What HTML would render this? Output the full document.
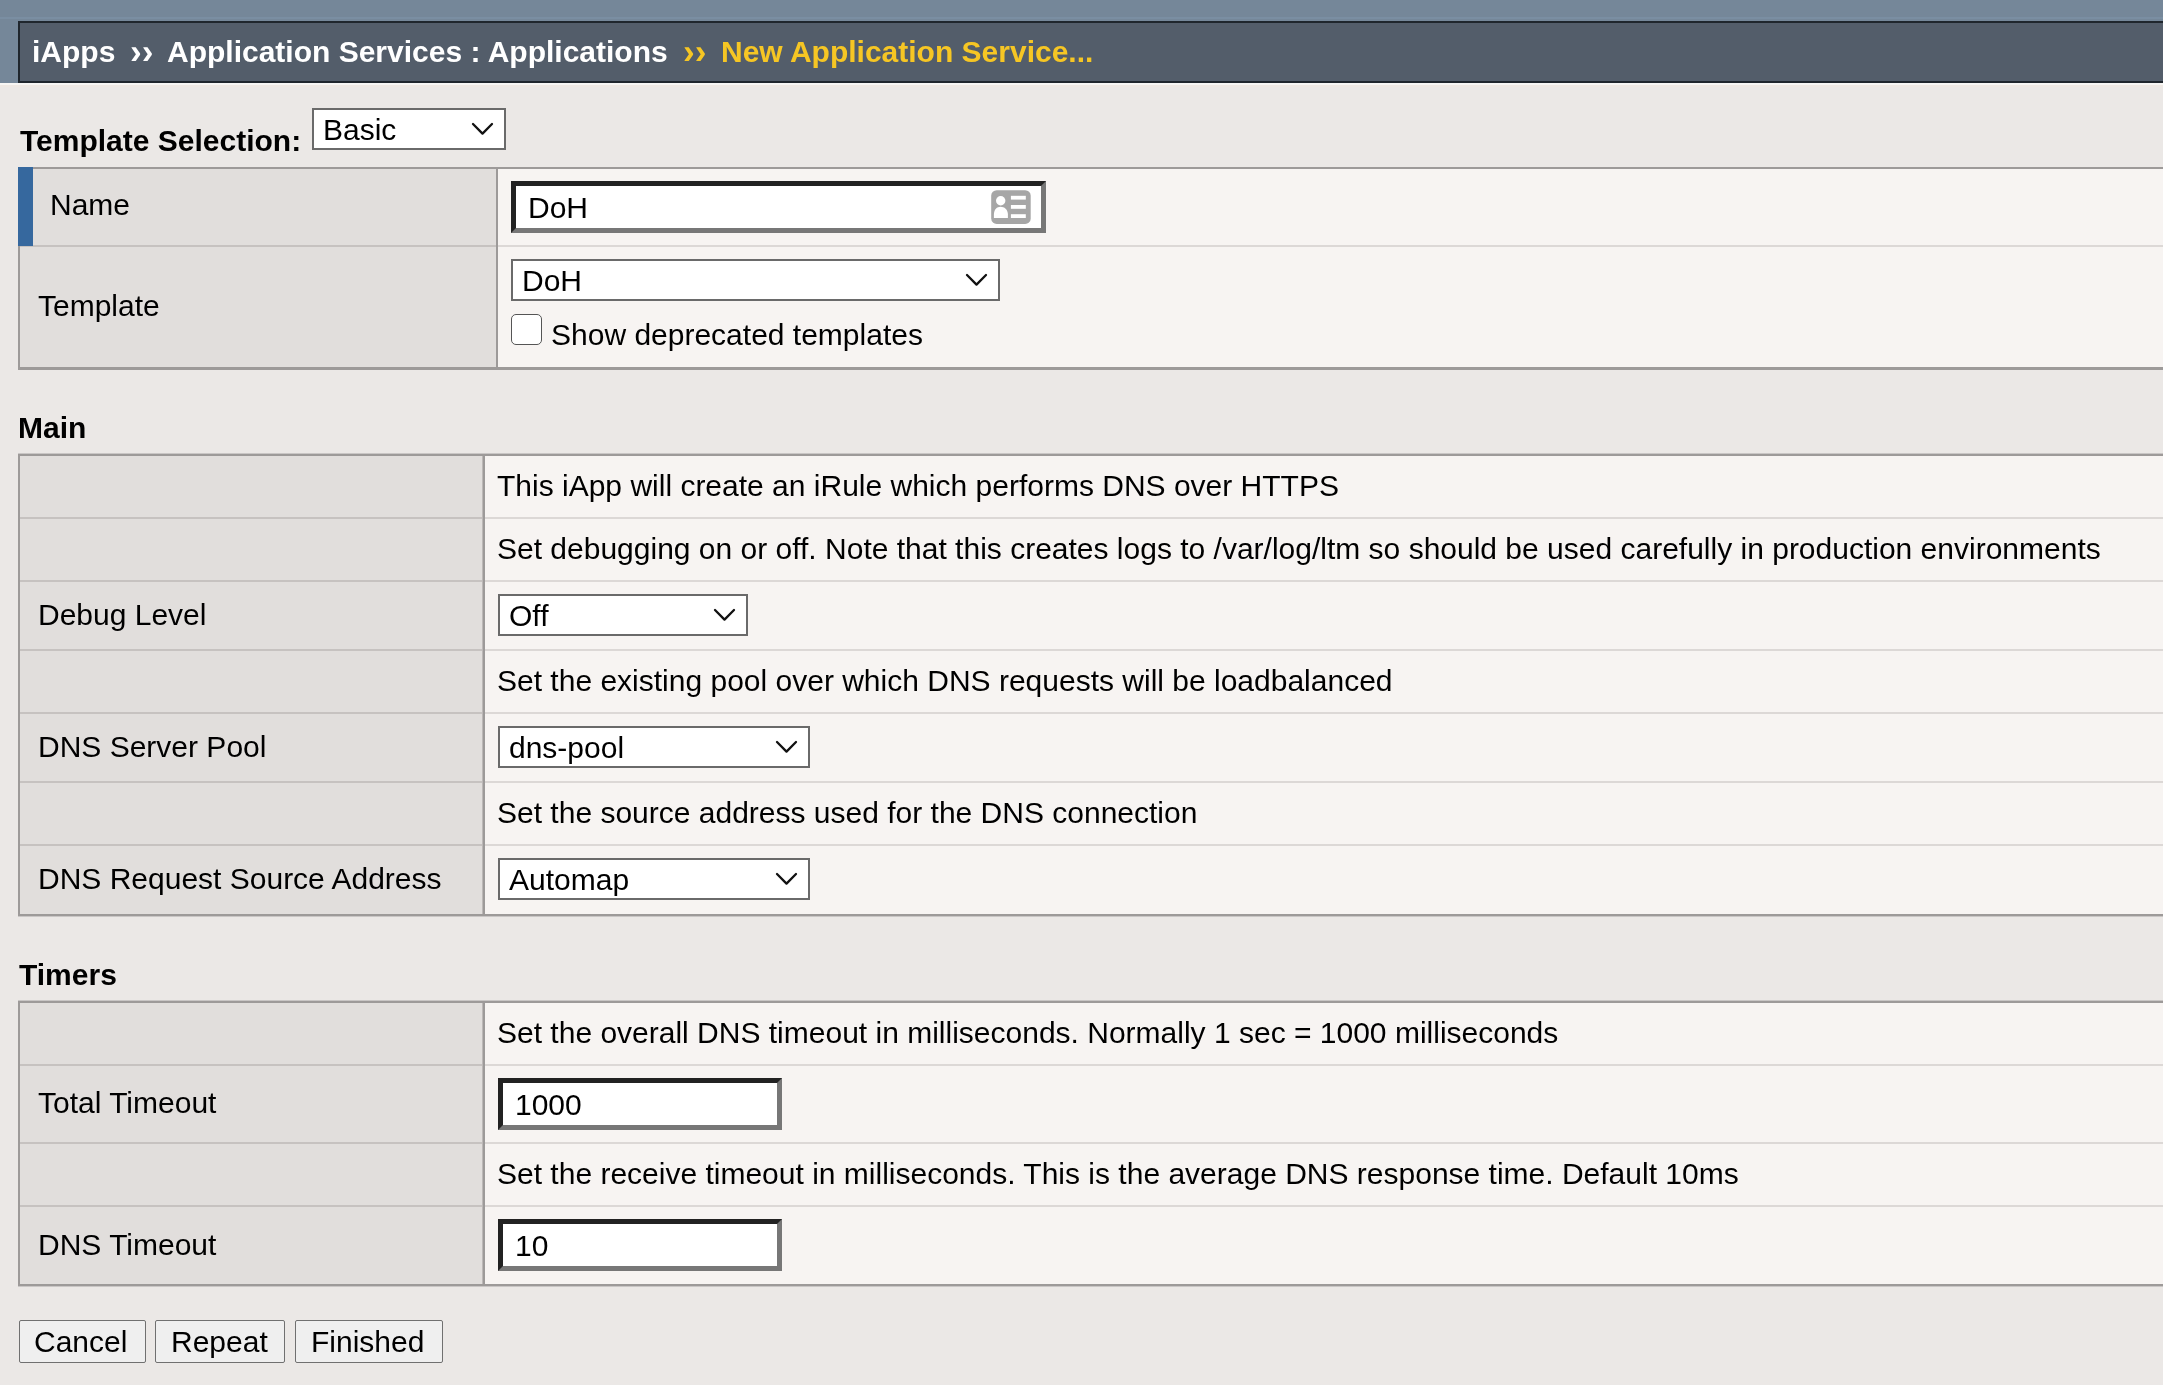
<!DOCTYPE html>
<html><head><meta charset="utf-8"><style>
html,body{margin:0;padding:0;width:2163px;height:1385px;overflow:hidden;background:#ebe8e6;}
body{position:relative;font-family:"Liberation Sans",sans-serif;font-size:30px;color:#000;}
body>div,body>svg{position:absolute;}
.t{white-space:nowrap;line-height:34px;will-change:transform;}
</style></head><body>
<div style="left:0px;top:0px;width:2163px;height:83px;background:#758799"></div>
<div style="left:0px;top:17px;width:2163px;height:2px;background:#7a8ea2"></div>
<div style="left:18px;top:21px;width:2145px;height:62px;background:#535d6a;border-top:2px solid #1f262d;border-bottom:2px solid #1f262d;border-left:2px solid #1f262d;box-sizing:border-box"></div>
<div style="left:0px;top:83px;width:2163px;height:2px;background:#f7f6f4"></div>
<div style="left:0px;top:85px;width:2163px;height:2px;background:#eee8e3"></div>
<div class="t" style="left:31.5px;top:34.6px;font-weight:bold;color:#fff">iApps</div>
<div class="t" style="left:130px;top:33.6px;font-weight:bold;color:#fff;font-size:35px">&#8250;&#8250;</div>
<div class="t" style="left:166.5px;top:34.6px;font-weight:bold;color:#fff">Application Services : Applications</div>
<div class="t" style="left:683px;top:33.6px;font-weight:bold;color:#f6c624;font-size:35px">&#8250;&#8250;</div>
<div class="t" style="left:721px;top:34.6px;font-weight:bold;color:#f6c624">New Application Service...</div>
<div class="t" style="left:19.6px;top:123.6px;font-weight:bold">Template Selection:</div>
<div style="left:312px;top:108px;width:194px;height:42px;background:#fff;border:2px solid #6a6a6a;box-sizing:border-box"></div>
<div class="t" style="left:323px;top:112.6px;">Basic</div>
<svg style="left:470.5px;top:121.0px" width="24" height="16" viewBox="0 0 24 16"><polyline points="2,3 11.5,12.6 21,3" fill="none" stroke="#111" stroke-width="2.3" stroke-linecap="round" stroke-linejoin="round"/></svg>
<div style="left:18px;top:167px;width:2145px;height:2px;background:#9d9a99"></div>
<div style="left:18px;top:367px;width:2145px;height:3px;background:#9d9a99"></div>
<div style="left:18px;top:169px;width:2px;height:198px;background:#9d9a99"></div>
<div style="left:496px;top:169px;width:2px;height:198px;background:#9d9a99"></div>
<div style="left:20px;top:169px;width:476px;height:198px;background:#e1dedc"></div>
<div style="left:498px;top:169px;width:1665px;height:198px;background:#f7f4f2"></div>
<div style="left:20px;top:245px;width:476px;height:2px;background:#c6c2c0"></div>
<div style="left:498px;top:245px;width:1665px;height:2px;background:#dcd8d6"></div>
<div style="left:18px;top:167px;width:15px;height:79px;background:#36689e"></div>
<div class="t" style="left:50.3px;top:188.0px;">Name</div>
<div style="left:511px;top:181px;width:535px;height:52px;background:#fff;border:5px solid;border-color:#222 #777 #777 #222;box-sizing:border-box"></div>
<div class="t" style="left:528px;top:190.6px;">DoH</div>
<svg style="left:985px;top:185px" width="52" height="44" viewBox="0 0 52 44">
<rect x="6.2" y="5.2" width="39.5" height="33.7" rx="5.5" fill="#a6a6a6"/>
<circle cx="15.7" cy="15.8" r="4.7" fill="#fff"/>
<path d="M8.9 33 L8.9 29.5 C8.9 24.5 12 21.8 15.6 21.8 C19.2 21.8 22.9 24.5 22.9 29.5 L22.9 33 Z" fill="#fff"/>
<rect x="25.9" y="10.8" width="14.9" height="3.8" fill="#fff"/>
<rect x="25.9" y="20" width="14.9" height="3.8" fill="#fff"/>
<rect x="25.9" y="29.2" width="14.9" height="3.8" fill="#fff"/>
</svg>
<div class="t" style="left:38.1px;top:288.6px;">Template</div>
<div style="left:511px;top:259px;width:489px;height:42px;background:#fff;border:2px solid #6a6a6a;box-sizing:border-box"></div>
<div class="t" style="left:522px;top:263.6px;">DoH</div>
<svg style="left:964.5px;top:272.0px" width="24" height="16" viewBox="0 0 24 16"><polyline points="2,3 11.5,12.6 21,3" fill="none" stroke="#111" stroke-width="2.3" stroke-linecap="round" stroke-linejoin="round"/></svg>
<div style="left:511px;top:314px;width:31px;height:31px;background:#fff;border:1.5px solid #555;border-radius:5px;box-sizing:border-box"></div>
<div class="t" style="left:551px;top:318.0px;">Show deprecated templates</div>
<div class="t" style="left:18px;top:410.6px;font-weight:bold">Main</div>
<div style="left:18px;top:453px;width:2145px;height:1px;background:#c9c6c5"></div>
<div style="left:18px;top:454px;width:2145px;height:2px;background:#9d9a99"></div>
<div style="left:18px;top:914px;width:2145px;height:2px;background:#9d9a99"></div>
<div style="left:18px;top:916px;width:2145px;height:1px;background:#c9c6c5"></div>
<div style="left:18px;top:456px;width:2px;height:458px;background:#9d9a99"></div>
<div style="left:482px;top:456px;width:1px;height:458px;background:#bcb8b7"></div>
<div style="left:483px;top:456px;width:2px;height:458px;background:#9d9a99"></div>
<div style="left:20px;top:456px;width:462px;height:61px;background:#e1dedc"></div>
<div style="left:485px;top:456px;width:1678px;height:61px;background:#f7f4f2"></div>
<div style="left:20px;top:517px;width:462px;height:2px;background:#c6c2c0"></div>
<div style="left:485px;top:517px;width:1678px;height:2px;background:#dcd8d6"></div>
<div class="t" style="left:496.6px;top:468.5px;">This iApp will create an iRule which performs DNS over HTTPS</div>
<div style="left:20px;top:519px;width:462px;height:61px;background:#e1dedc"></div>
<div style="left:485px;top:519px;width:1678px;height:61px;background:#f7f4f2"></div>
<div style="left:20px;top:580px;width:462px;height:2px;background:#c6c2c0"></div>
<div style="left:485px;top:580px;width:1678px;height:2px;background:#dcd8d6"></div>
<div class="t" style="left:496.6px;top:531.5px;">Set debugging on or off. Note that this creates logs to /var/log/ltm so should be used carefully in production environments</div>
<div style="left:20px;top:582px;width:462px;height:67px;background:#e1dedc"></div>
<div style="left:485px;top:582px;width:1678px;height:67px;background:#f7f4f2"></div>
<div style="left:20px;top:649px;width:462px;height:2px;background:#c6c2c0"></div>
<div style="left:485px;top:649px;width:1678px;height:2px;background:#dcd8d6"></div>
<div class="t" style="left:38.1px;top:597.5px;">Debug Level</div>
<div style="left:498px;top:594px;width:250px;height:42px;background:#fff;border:2px solid #6a6a6a;box-sizing:border-box"></div>
<div class="t" style="left:509px;top:598.6px;">Off</div>
<svg style="left:712.5px;top:607.0px" width="24" height="16" viewBox="0 0 24 16"><polyline points="2,3 11.5,12.6 21,3" fill="none" stroke="#111" stroke-width="2.3" stroke-linecap="round" stroke-linejoin="round"/></svg>
<div style="left:20px;top:651px;width:462px;height:61px;background:#e1dedc"></div>
<div style="left:485px;top:651px;width:1678px;height:61px;background:#f7f4f2"></div>
<div style="left:20px;top:712px;width:462px;height:2px;background:#c6c2c0"></div>
<div style="left:485px;top:712px;width:1678px;height:2px;background:#dcd8d6"></div>
<div class="t" style="left:496.6px;top:663.5px;">Set the existing pool over which DNS requests will be loadbalanced</div>
<div style="left:20px;top:714px;width:462px;height:67px;background:#e1dedc"></div>
<div style="left:485px;top:714px;width:1678px;height:67px;background:#f7f4f2"></div>
<div style="left:20px;top:781px;width:462px;height:2px;background:#c6c2c0"></div>
<div style="left:485px;top:781px;width:1678px;height:2px;background:#dcd8d6"></div>
<div class="t" style="left:38.1px;top:729.5px;">DNS Server Pool</div>
<div style="left:498px;top:726px;width:312px;height:42px;background:#fff;border:2px solid #6a6a6a;box-sizing:border-box"></div>
<div class="t" style="left:509px;top:730.6px;">dns-pool</div>
<svg style="left:774.5px;top:739.0px" width="24" height="16" viewBox="0 0 24 16"><polyline points="2,3 11.5,12.6 21,3" fill="none" stroke="#111" stroke-width="2.3" stroke-linecap="round" stroke-linejoin="round"/></svg>
<div style="left:20px;top:783px;width:462px;height:61px;background:#e1dedc"></div>
<div style="left:485px;top:783px;width:1678px;height:61px;background:#f7f4f2"></div>
<div style="left:20px;top:844px;width:462px;height:2px;background:#c6c2c0"></div>
<div style="left:485px;top:844px;width:1678px;height:2px;background:#dcd8d6"></div>
<div class="t" style="left:496.6px;top:795.5px;">Set the source address used for the DNS connection</div>
<div style="left:20px;top:846px;width:462px;height:68px;background:#e1dedc"></div>
<div style="left:485px;top:846px;width:1678px;height:68px;background:#f7f4f2"></div>
<div class="t" style="left:38.1px;top:862.0px;">DNS Request Source Address</div>
<div style="left:498px;top:858px;width:312px;height:42px;background:#fff;border:2px solid #6a6a6a;box-sizing:border-box"></div>
<div class="t" style="left:509px;top:862.6px;">Automap</div>
<svg style="left:774.5px;top:871.0px" width="24" height="16" viewBox="0 0 24 16"><polyline points="2,3 11.5,12.6 21,3" fill="none" stroke="#111" stroke-width="2.3" stroke-linecap="round" stroke-linejoin="round"/></svg>
<div class="t" style="left:19px;top:957.6px;font-weight:bold">Timers</div>
<div style="left:18px;top:1000px;width:2145px;height:1px;background:#c9c6c5"></div>
<div style="left:18px;top:1001px;width:2145px;height:2px;background:#9d9a99"></div>
<div style="left:18px;top:1284px;width:2145px;height:2px;background:#9d9a99"></div>
<div style="left:18px;top:1286px;width:2145px;height:1px;background:#c9c6c5"></div>
<div style="left:18px;top:1003px;width:2px;height:281px;background:#9d9a99"></div>
<div style="left:482px;top:1003px;width:1px;height:281px;background:#bcb8b7"></div>
<div style="left:483px;top:1003px;width:2px;height:281px;background:#9d9a99"></div>
<div style="left:20px;top:1003px;width:462px;height:61px;background:#e1dedc"></div>
<div style="left:485px;top:1003px;width:1678px;height:61px;background:#f7f4f2"></div>
<div style="left:20px;top:1064px;width:462px;height:2px;background:#c6c2c0"></div>
<div style="left:485px;top:1064px;width:1678px;height:2px;background:#dcd8d6"></div>
<div class="t" style="left:496.6px;top:1015.5px;">Set the overall DNS timeout in milliseconds. Normally 1 sec = 1000 milliseconds</div>
<div style="left:20px;top:1066px;width:462px;height:76px;background:#e1dedc"></div>
<div style="left:485px;top:1066px;width:1678px;height:76px;background:#f7f4f2"></div>
<div style="left:20px;top:1142px;width:462px;height:2px;background:#c6c2c0"></div>
<div style="left:485px;top:1142px;width:1678px;height:2px;background:#dcd8d6"></div>
<div class="t" style="left:38.1px;top:1086.0px;">Total Timeout</div>
<div style="left:498px;top:1078px;width:284px;height:52px;background:#fff;border:5px solid;border-color:#222 #777 #777 #222;box-sizing:border-box"></div>
<div class="t" style="left:515px;top:1087.6px;">1000</div>
<div style="left:20px;top:1144px;width:462px;height:61px;background:#e1dedc"></div>
<div style="left:485px;top:1144px;width:1678px;height:61px;background:#f7f4f2"></div>
<div style="left:20px;top:1205px;width:462px;height:2px;background:#c6c2c0"></div>
<div style="left:485px;top:1205px;width:1678px;height:2px;background:#dcd8d6"></div>
<div class="t" style="left:496.6px;top:1156.5px;">Set the receive timeout in milliseconds. This is the average DNS response time. Default 10ms</div>
<div style="left:20px;top:1207px;width:462px;height:77px;background:#e1dedc"></div>
<div style="left:485px;top:1207px;width:1678px;height:77px;background:#f7f4f2"></div>
<div class="t" style="left:38.1px;top:1227.5px;">DNS Timeout</div>
<div style="left:498px;top:1219px;width:284px;height:52px;background:#fff;border:5px solid;border-color:#222 #777 #777 #222;box-sizing:border-box"></div>
<div class="t" style="left:515px;top:1228.6px;">10</div>
<div style="left:18.5px;top:1320px;width:127px;height:43px;background:#efefef;border:1.5px solid #707070;border-radius:2px;box-sizing:border-box"></div>
<div class="t" style="left:34.1px;top:1324.6px;">Cancel</div>
<div style="left:155.3px;top:1320px;width:130px;height:43px;background:#efefef;border:1.5px solid #707070;border-radius:2px;box-sizing:border-box"></div>
<div class="t" style="left:170.9px;top:1324.6px;">Repeat</div>
<div style="left:295.2px;top:1320px;width:147.6px;height:43px;background:#efefef;border:1.5px solid #707070;border-radius:2px;box-sizing:border-box"></div>
<div class="t" style="left:310.8px;top:1324.6px;">Finished</div>
</body></html>
